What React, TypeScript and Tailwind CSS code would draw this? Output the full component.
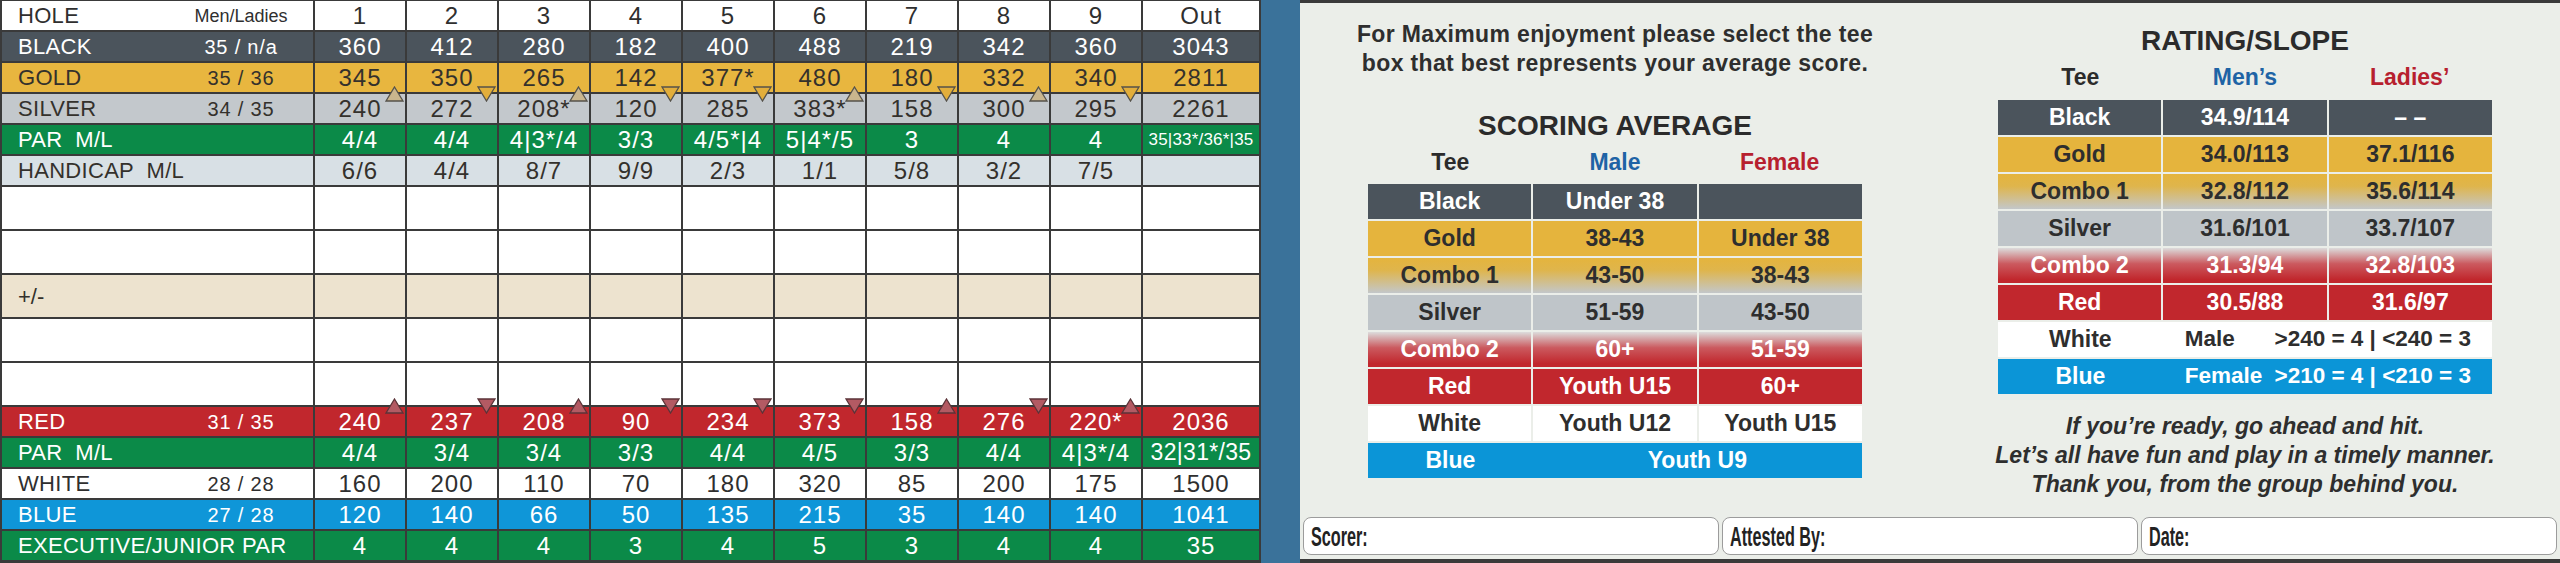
import React from "react";

type TRow = {
  label: string;
  sub?: string;
  vals: string[];
  out: string;
  bg: string;
  fg: string;
  outCls?: string;
};

const GRID = "grid grid-cols-[311px_repeat(9,90px)_116px] gap-x-[2px]";

const topRows: TRow[] = [
  { label: "HOLE", sub: "Men/Ladies", vals: ["1", "2", "3", "4", "5", "6", "7", "8", "9"], out: "Out", bg: "bg-white", fg: "text-[#2f2f2f]" },
  { label: "BLACK", sub: "35 / n/a", vals: ["360", "412", "280", "182", "400", "488", "219", "342", "360"], out: "3043", bg: "bg-[#4b545c]", fg: "text-white" },
  { label: "GOLD", sub: "35 / 36", vals: ["345", "350", "265", "142", "377*", "480", "180", "332", "340"], out: "2811", bg: "bg-[#e8b63f]", fg: "text-[#34312c]" },
  { label: "SILVER", sub: "34 / 35", vals: ["240", "272", "208*", "120", "285", "383*", "158", "300", "295"], out: "2261", bg: "bg-[#c3c8cc]", fg: "text-[#34312c]" },
  { label: "PAR  M/L", vals: ["4/4", "4/4", "4|3*/4", "3/3", "4/5*|4", "5|4*/5", "3", "4", "4"], out: "35|33*/36*|35", bg: "bg-[#0b8a48]", fg: "text-white", outCls: "text-[17px] tracking-[0.2px]" },
  { label: "HANDICAP  M/L", vals: ["6/6", "4/4", "8/7", "9/9", "2/3", "1/1", "5/8", "3/2", "7/5"], out: "", bg: "bg-[#d8e0e5]", fg: "text-[#34312c]" },
];

const bottomRows: TRow[] = [
  { label: "RED", sub: "31 / 35", vals: ["240", "237", "208", "90", "234", "373", "158", "276", "220*"], out: "2036", bg: "bg-[#c1272d]", fg: "text-white" },
  { label: "PAR  M/L", vals: ["4/4", "3/4", "3/4", "3/3", "4/4", "4/5", "3/3", "4/4", "4|3*/4"], out: "32|31*/35", bg: "bg-[#0b8a48]", fg: "text-white", outCls: "text-[23px] tracking-[0.3px]" },
  { label: "WHITE", sub: "28 / 28", vals: ["160", "200", "110", "70", "180", "320", "85", "200", "175"], out: "1500", bg: "bg-white", fg: "text-[#2f2f2f]" },
  { label: "BLUE", sub: "27 / 28", vals: ["120", "140", "66", "50", "135", "215", "35", "140", "140"], out: "1041", bg: "bg-[#0f96d8]", fg: "text-white" },
  { label: "EXECUTIVE/JUNIOR PAR", vals: ["4", "4", "4", "3", "4", "5", "3", "4", "4"], out: "35", bg: "bg-[#0b8a48]", fg: "text-white" },
];

function ScoreRow({ r }: { r: TRow }) {
  return (
    <div className={`${GRID} h-[29px]`}>
      <div className={`${r.bg} ${r.fg} flex items-center pl-[16px] pr-[22px]`}>
        <span className="flex-1 whitespace-pre text-[22px] leading-none tracking-[0.3px]">{r.label}</span>
        {r.sub !== undefined && (
          <span
            className={`w-[100px] text-center leading-none whitespace-pre ${
              r.label === "HOLE" ? "text-[18px]" : "text-[20px] tracking-[0.8px]"
            }`}
          >
            {r.sub}
          </span>
        )}
      </div>
      {r.vals.map((v, i) => (
        <div key={i} className={`${r.bg} ${r.fg} flex items-center justify-center whitespace-pre text-[24px] leading-none tracking-[1px]`}>
          {v}
        </div>
      ))}
      <div className={`${r.bg} ${r.fg} flex items-center justify-center whitespace-pre leading-none ${r.outCls ?? "text-[24px] tracking-[1px]"}`}>
        {r.out}
      </div>
    </div>
  );
}

function BlankRow({ label, bg }: { label: string; bg: string }) {
  return (
    <div className={`${GRID} h-[42px]`}>
      <div className={`${bg} flex items-center pl-[16px] text-[22px] text-[#34312c]`}>{label}</div>
      {Array.from({ length: 10 }).map((_, i) => (
        <div key={i} className={bg} />
      ))}
    </div>
  );
}

function Tri({ dir, col, top, kind }: { dir: "u" | "d"; col: number; top: number; kind: "g" | "r" }) {
  const right = 315 + col * 92 + 90;
  const fill = kind === "r" ? "#b35a63" : dir === "u" ? "#c9b68d" : "#e2ae3b";
  const stroke = kind === "r" ? "#5b3338" : "#55524a";
  return (
    <svg className="absolute" style={{ left: right - 20, top }} width="19" height="16" viewBox="0 0 19 16">
      {dir === "u" ? (
        <polygon points="9.5,1 18,15 1,15" fill={fill} stroke={stroke} strokeWidth="1.3" />
      ) : (
        <polygon points="1,1 18,1 9.5,15" fill={fill} stroke={stroke} strokeWidth="1.3" />
      )}
    </svg>
  );
}

const goldTri: ("u" | "d")[] = ["u", "d", "u", "d", "d", "u", "d", "u", "d"];
const redTri: ("u" | "d")[] = ["u", "d", "u", "d", "d", "d", "u", "d", "u"];

function ScoreCard() {
  return (
    <div className="relative w-[1261px] h-[563px] bg-[#3a3a3a] pt-[1px] pb-[3px] px-[2px] flex flex-col gap-[2px] font-['Liberation_Sans',Arial,sans-serif]">
      {topRows.map((r, i) => (
        <ScoreRow key={"t" + i} r={r} />
      ))}
      <BlankRow label="" bg="bg-white" />
      <BlankRow label="" bg="bg-white" />
      <BlankRow label="+/-" bg="bg-[#ede3cf]" />
      <BlankRow label="" bg="bg-white" />
      <BlankRow label="" bg="bg-white" />
      {bottomRows.map((r, i) => (
        <ScoreRow key={"b" + i} r={r} />
      ))}
      {goldTri.map((d, i) => (
        <Tri key={"g" + i} dir={d} col={i} top={86} kind="g" />
      ))}
      {redTri.map((d, i) => (
        <Tri key={"r" + i} dir={d} col={i} top={398} kind="r" />
      ))}
    </div>
  );
}

type TableRow = { cells: string[]; bg: string; fg: string };

const saRows: TableRow[] = [
  { cells: ["Black", "Under 38", ""], bg: "bg-[#4b545c]", fg: "text-white" },
  { cells: ["Gold", "38-43", "Under 38"], bg: "bg-[#e5b43d]", fg: "text-[#2e2e2e]" },
  { cells: ["Combo 1", "43-50", "38-43"], bg: "bg-[linear-gradient(180deg,#e5b43d_0%,#dfb54c_35%,#c3c7c9_100%)]", fg: "text-[#2e2e2e]" },
  { cells: ["Silver", "51-59", "43-50"], bg: "bg-[#bfc5c9]", fg: "text-[#2e2e2e]" },
  { cells: ["Combo 2", "60+", "51-59"], bg: "bg-[linear-gradient(180deg,#dcdcdc_0%,#cb5a5f_45%,#c1272d_90%)]", fg: "text-white" },
  { cells: ["Red", "Youth U15", "60+"], bg: "bg-[#c1272d]", fg: "text-white" },
  { cells: ["White", "Youth U12", "Youth U15"], bg: "bg-white", fg: "text-[#2e2e2e]" },
];

const rsRows: TableRow[] = [
  { cells: ["Black", "34.9/114", "– –"], bg: "bg-[#4b545c]", fg: "text-white" },
  { cells: ["Gold", "34.0/113", "37.1/116"], bg: "bg-[#e5b43d]", fg: "text-[#2e2e2e]" },
  { cells: ["Combo 1", "32.8/112", "35.6/114"], bg: "bg-[linear-gradient(180deg,#e5b43d_0%,#dfb54c_35%,#c3c7c9_100%)]", fg: "text-[#2e2e2e]" },
  { cells: ["Silver", "31.6/101", "33.7/107"], bg: "bg-[#bfc5c9]", fg: "text-[#2e2e2e]" },
  { cells: ["Combo 2", "31.3/94", "32.8/103"], bg: "bg-[linear-gradient(180deg,#dcdcdc_0%,#cb5a5f_45%,#c1272d_90%)]", fg: "text-white" },
  { cells: ["Red", "30.5/88", "31.6/97"], bg: "bg-[#c1272d]", fg: "text-white" },
];

function TRowView({ r }: { r: TableRow }) {
  return (
    <div className="grid grid-cols-3 gap-[2px] h-[35px]">
      {r.cells.map((c, i) => (
        <div key={i} className={`${r.bg} ${r.fg} flex items-center justify-center text-[23px] leading-none`}>
          {c}
        </div>
      ))}
    </div>
  );
}

function Header({ a, b, c }: { a: string; b: string; c: string }) {
  return (
    <div className="grid grid-cols-3 w-[494px] text-center text-[23px] leading-[26px]">
      <div className="text-[#2b2b2b]">{a}</div>
      <div className="text-[#1e63a5]">{b}</div>
      <div className="text-[#b7202e]">{c}</div>
    </div>
  );
}

function SignBox({ label }: { label: string }) {
  return (
    <div className="flex-1 h-[38px] bg-white border border-[#9c9c9c] rounded-[8px] flex items-center pl-[7px] pt-[3px]">
      <span className="inline-block origin-left scale-x-[0.6] text-[27px] font-bold text-[#222] leading-none">{label}</span>
    </div>
  );
}

function InfoPanel() {
  return (
    <div className="w-[1260px] h-[563px] bg-[#ebeee9] border-t-[3px] border-b-[4px] border-[#3a3a3a] flex flex-col font-['Liberation_Sans',Arial,sans-serif] font-bold">
      <div className="grid grid-cols-2 flex-1">
        <div className="flex flex-col items-center pt-[17px]">
          <div className="text-center text-[23px] leading-[29px] tracking-[0.35px] text-[#2e2e2e]">
            <div>For Maximum enjoyment please select the tee</div>
            <div>box that best represents your average score.</div>
          </div>
          <div className="mt-[34px] text-[28px] leading-[28px] text-[#2b2b2b]">SCORING AVERAGE</div>
          <div className="mt-[9px]">
            <Header a="Tee" b="Male" c="Female" />
          </div>
          <div className="mt-[9px] w-[494px] flex flex-col gap-[2px]">
            {saRows.map((r, i) => (
              <TRowView key={i} r={r} />
            ))}
            <div className="grid grid-cols-3 h-[35px] bg-[#0b95d7] text-white text-[23px] leading-none">
              <div className="flex items-center justify-center">Blue</div>
              <div className="col-span-2 flex items-center justify-center">Youth U9</div>
            </div>
          </div>
        </div>
        <div className="flex flex-col items-center pt-[24px]">
          <div className="text-[28px] leading-[28px] text-[#2b2b2b]">RATING/SLOPE</div>
          <div className="mt-[9px]">
            <Header a="Tee" b="Men’s" c="Ladies’" />
          </div>
          <div className="mt-[10px] w-[494px] flex flex-col gap-[2px]">
            {rsRows.map((r, i) => (
              <TRowView key={i} r={r} />
            ))}
            <div className="grid grid-cols-3 h-[35px] bg-white text-[#2e2e2e] leading-none">
              <div className="flex items-center justify-center text-[23px]">White</div>
              <div className="col-span-2 flex items-center justify-between pl-[22px] pr-[21px] text-[22.5px]">
                <span>Male</span>
                <span>&gt;240 = 4 | &lt;240 = 3</span>
              </div>
            </div>
            <div className="grid grid-cols-3 h-[35px] bg-[#0b95d7] text-white leading-none">
              <div className="flex items-center justify-center text-[23px]">Blue</div>
              <div className="col-span-2 flex items-center justify-between pl-[22px] pr-[21px] text-[22.5px]">
                <span>Female</span>
                <span>&gt;210 = 4 | &lt;210 = 3</span>
              </div>
            </div>
          </div>
          <div className="mt-[18px] text-center italic text-[23px] leading-[29px] text-[#2e2e2e]">
            <div>If you’re ready, go ahead and hit.</div>
            <div>Let’s all have fun and play in a timely manner.</div>
            <div>Thank you, from the group behind you.</div>
          </div>
        </div>
      </div>
      <div className="flex gap-[3px] px-[3px] mb-[4px]">
        <SignBox label="Scorer:" />
        <SignBox label="Attested By:" />
        <SignBox label="Date:" />
      </div>
    </div>
  );
}

export default function App() {
  return (
    <div className="flex w-[2560px] h-[563px] overflow-hidden bg-[#3a729a]">
      <ScoreCard />
      <div className="w-[39px] bg-[#3a729a]" />
      <InfoPanel />
    </div>
  );
}
